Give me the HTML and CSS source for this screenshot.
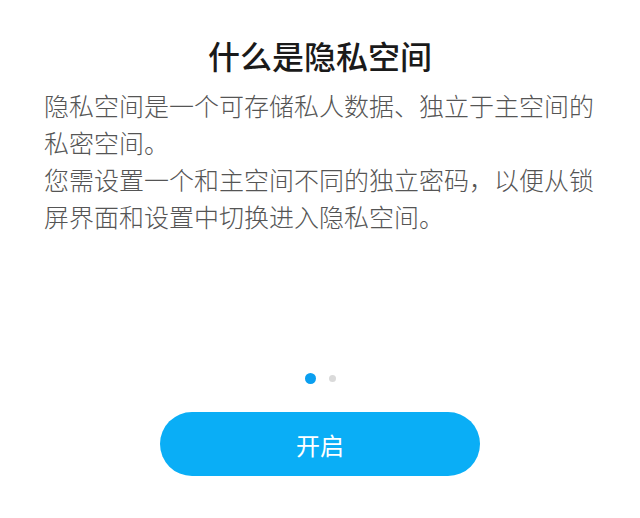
FILE: index.html
```html
<!DOCTYPE html>
<html lang="zh-CN">
<head>
<meta charset="utf-8">
<title>隐私空间</title>
<link rel="stylesheet" href="styles.css">
</head>
<body>
<main class="page">
  <h1 class="title">什么是隐私空间</h1>
  <div class="desc">
    <p class="para">隐私空间是一个可存储私人数据、独立于主空间的私密空间。</p>
    <p class="para">您需设置一个和主空间不同的独立密码，以便从锁屏界面和设置中切换进入隐私空间。</p>
  </div>
  <div class="spacer"></div>
  <div class="dots">
    <span class="dot dot-active"></span>
    <span class="dot"></span>
  </div>
  <button class="btn" type="button">开启</button>
</main>
</body>
</html>
```

FILE: styles.css
```css
html, body {
  margin: 0;
  padding: 0;
  background: #ffffff;
}

body {
  font-family: "Noto Sans CJK SC", "Noto Sans", sans-serif;
  width: 640px;
  height: 518px;
  overflow: hidden;
}

.page {
  display: flex;
  flex-direction: column;
  align-items: center;
  height: 518px;
  box-sizing: border-box;
  padding: 33px 0 42px;
}

.title {
  margin: 0;
  font-size: 32px;
  line-height: 44px;
  font-weight: 500;
  color: #1a1a1a;
  text-align: center;
}

.desc {
  width: 552px;
  margin-top: 10px;
  color: #555555;
  font-size: 25px;
  font-weight: 300;
  line-height: 37px;
}

.para {
  margin: 0;
}

.spacer {
  flex: 1;
}

.dots {
  display: flex;
  align-items: center;
  gap: 13px;
  height: 12px;
}

.dot {
  width: 7px;
  height: 7px;
  border-radius: 50%;
  background: #dadada;
}

.dot-active {
  width: 11px;
  height: 11px;
  background: #0a9ff0;
}

.btn {
  margin-top: 28px;
  width: 320px;
  height: 64px;
  border: none;
  border-radius: 32px;
  background: #0aaef6;
  color: #ffffff;
  font-family: "Noto Sans CJK SC", "Noto Sans", sans-serif;
  font-size: 24px;
  font-weight: 400;
  padding: 0;
}
```
